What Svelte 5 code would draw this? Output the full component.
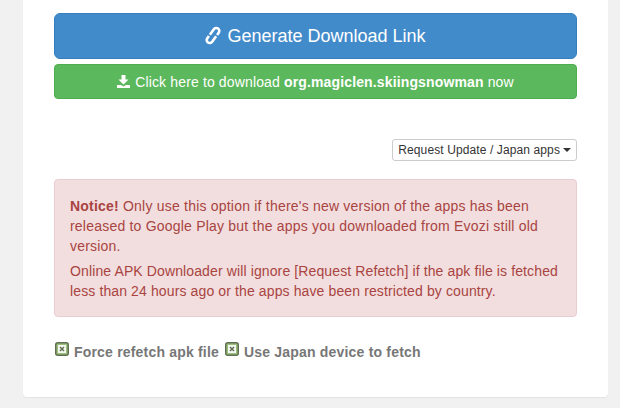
<script>
  const paragraphs = [
    "Only use this option if there's new version of the apps has been released to Google Play but the apps you downloaded from Evozi still old version.",
    'Online APK Downloader will ignore [Request Refetch] if the apk file is fetched less than 24 hours ago or the apps have been restricted by country.'
  ];
  const options = ['Force refetch apk file', 'Use Japan device to fetch'];
</script>

<div class="page">
  <main class="card">
    <button class="btn btn--primary">
      <svg class="icon icon--link" viewBox="0 0 16 19" aria-hidden="true">
        <g transform="translate(8 9.5) rotate(36)">
          <path d="M3 -2.800V-5.600a3 3 0 0 0-6 0V1.200M-3 2.800V5.600a3 3 0 0 0 6 0V-1.200" />
        </g>
      </svg>
      Generate Download Link
    </button>

    <button class="btn btn--success">
      <svg class="icon icon--download" viewBox="0 0 13 13" aria-hidden="true">
        <path d="M4.500 0h4v4.500h3l-5 5-5-5h3zM0 10h4l2.500 1.500L9 10h4v3H0z" />
      </svg>
      Click here to download <b>org.magiclen.skiingsnowman</b> now
    </button>

    <div class="toolbar">
      <button class="select">Request Update / Japan apps<span class="caret"></span></button>
    </div>

    <div class="alert">
      <p class="lead"><b>Notice!</b> {paragraphs[0]}</p>
      <p>{paragraphs[1]}</p>
    </div>

    <div class="options">
      {#each options as option}
        <label class="option">
          <svg class="check" viewBox="0 0 14 14" aria-hidden="true">
            <rect x="0.75" y="0.75" width="12.500" height="12.500" rx="2" fill="#9dbf7e" stroke="#5f6f52" stroke-width="1.500" />
            <rect x="3" y="3" width="8" height="8" fill="#f6f8f2" />
            <path d="M5 5l4 4M9 5l-4 4" stroke="#5f6f52" stroke-width="1.500" />
          </svg>{option}
        </label>
      {/each}
    </div>
  </main>
</div>

<style>
  :global(body) {
    margin: 0;
    background: #f1f1f1;
    font-family: 'Liberation Sans', Arial, sans-serif;
  }
  .page {
    height: 408px;
    overflow: hidden;
    padding: 0 12px 0 23px;
    box-sizing: border-box;
  }
  .card {
    height: 397px;
    box-sizing: border-box;
    padding: 13px 31px 0;
    background: #fff;
    border-radius: 0 0 4px 4px;
    box-shadow: 0 1px 1px rgba(0, 0, 0, 0.06);
  }
  .btn {
    display: block;
    width: 100%;
    box-sizing: border-box;
    border: 1px solid;
    color: #fff;
    font-family: inherit;
    text-align: center;
    padding: 0;
  }
  .btn--primary {
    height: 46px;
    margin-bottom: 5px;
    padding-top: 1px;
    font-size: 18px;
    border-radius: 6px;
    background: #428bca;
    border-color: #357ebd;
  }
  .btn--success {
    height: 35px;
    font-size: 14px;
    letter-spacing: 0.14px;
    border-radius: 4px;
    background: #5cb85c;
    border-color: #4cae4c;
  }
  .icon {
    fill: #fff;
    display: inline-block;
  }
  .icon--link {
    width: 16px;
    height: 19px;
    vertical-align: -3px;
    margin-right: 1px;
    fill: none;
    stroke: #fff;
    stroke-width: 2.6;
  }
  .icon--download {
    width: 13px;
    height: 13px;
    vertical-align: -1px;
    margin-right: 1px;
  }
  .toolbar {
    display: flex;
    justify-content: flex-end;
    margin-top: 40px;
  }
  .select {
    display: flex;
    align-items: center;
    height: 22px;
    padding: 0 5px;
    box-sizing: border-box;
    background: #fff;
    border: 1px solid #ccc;
    border-radius: 3px;
    color: #333;
    font-family: inherit;
    font-size: 12px;
    letter-spacing: 0.11px;
  }
  .caret {
    width: 0;
    height: 0;
    margin-left: 3px;
    border-top: 4px solid #333;
    border-left: 4px solid transparent;
    border-right: 4px solid transparent;
  }
  .alert {
    margin-top: 18px;
    padding: 16px 15px 15px;
    background: #f2dede;
    border: 1px solid #ebccd1;
    border-radius: 4px;
    color: #a94442;
    font-size: 14px;
    line-height: 20px;
    letter-spacing: 0.12px;
  }
  .alert p {
    margin: 0;
  }
  .alert .lead {
    letter-spacing: 0.21px;
  }
  .alert p + p {
    margin-top: 5px;
  }
  .options {
    display: flex;
    margin-top: 25px;
    gap: 5px;
  }
  .option {
    display: flex;
    align-items: flex-start;
    color: #777;
    font-size: 14px;
    font-weight: 700;
    line-height: 20px;
    letter-spacing: 0.19px;
  }
  .check {
    width: 14px;
    height: 14px;
    margin: 0 5px 0 1px;
  }
</style>
